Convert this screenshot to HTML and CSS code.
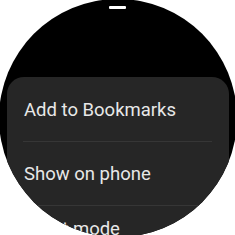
FILE: index.html
```html
<!DOCTYPE html>
<html lang="en">
<head>
<meta charset="utf-8">
<title>Menu</title>
<link rel="stylesheet" href="styles.css">
</head>
<body>
<div class="watch">
  <div class="handle"></div>
  <ul class="sheet">
    <li class="item">Add to Bookmarks</li>
    <li class="item">Show on phone</li>
    <li class="item item-last">Night mode</li>
  </ul>
</div>
</body>
</html>
```
FILE: styles.css
```css
html, body {
  margin: 0;
  padding: 0;
  background: #ffffff;
  overflow: hidden;
}
body {
  width: 235px;
  height: 235px;
}
.watch {
  width: 238px;
  height: 238px;
  margin: -1px 0 0 -1.5px;
  border-radius: 50%;
  overflow: hidden;
  background: #000000;
  display: flex;
  flex-direction: column;
  align-items: flex-start;
  font-family: Roboto, "Liberation Sans", sans-serif;
}
.handle {
  flex-shrink: 0;
  width: 17px;
  height: 3px;
  margin: 7px 0 0 110.5px;
  background: #ffffff;
  border-radius: 1px;
}
.sheet {
  flex-shrink: 0;
  list-style: none;
  margin: 68px 0 0 8.5px;
  padding: 1px 0 0 0;
  width: 222px;
  height: 200px;
  background: #262626;
  border-radius: 17px 17px 0 0;
}
.item {
  height: 63px;
  margin: 0 17px 0 16px;
  padding-left: 1px;
  border-bottom: 1px solid #363636;
  display: flex;
  align-items: center;
  color: #e8e8e8;
  font-size: 18.5px;
  white-space: nowrap;
}
.item-last {
  border-bottom: none;
  align-items: flex-start;
  padding-top: 12px;
}
```
